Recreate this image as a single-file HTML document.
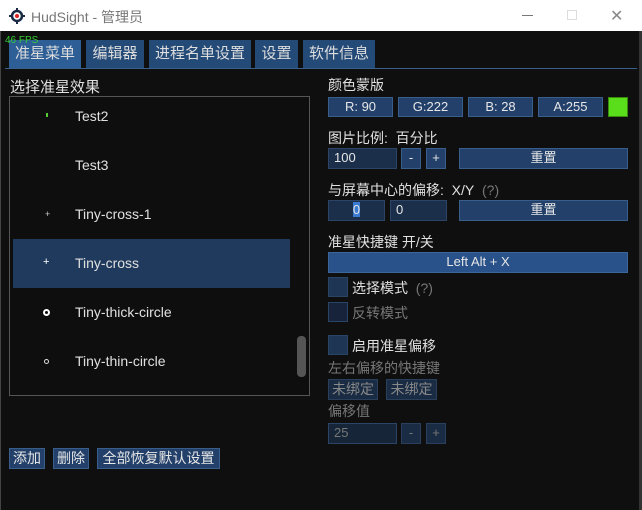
<!DOCTYPE html>
<html><head><meta charset="utf-8"><style>
*{margin:0;padding:0;box-sizing:border-box}
body{width:642px;height:510px;background:#0f0f0f;font-family:"Liberation Sans","Noto Sans CJK SC",sans-serif;color:#e6e6e6;position:relative;overflow:hidden;font-size:14px}
.a{position:absolute}
.tb{left:0;top:0;width:642px;height:31px;background:#fff;color:#777;font-size:14px}
.btn{position:absolute;background:#22406a;border:1px solid #3a5e8c;color:#e6e6e6;text-align:center;font-size:13px;line-height:18px}
.inp{position:absolute;background:#1c2f4a;border:1px solid #2c4466;color:#e6e6e6;font-size:13px;line-height:18px;padding-left:5px}
.tab{position:absolute;top:40px;height:28px;background:#244a78;color:#ddd;font-size:15px;line-height:28px;text-align:center}
.lbl{position:absolute;font-size:14px;color:#e0e0e0}
.cb{position:absolute;width:20px;height:20px;background:#1f3554;border:1px solid #2a4466}
.it{position:absolute;left:75px;font-size:14px;color:#e0e0e0}
.dis{color:#777}
</style></head><body>
<div class="a tb">
 <svg class="a" style="left:9px;top:8px" width="16" height="16" viewBox="0 0 16 16"><circle cx="8" cy="8" r="5" fill="none" stroke="#1a2a44" stroke-width="2.5"/><circle cx="8" cy="8" r="2" fill="#d22"/><path d="M8 0v4M8 12v4M0 8h4M12 8h4" stroke="#1a2a44" stroke-width="2"/></svg>
 <div class="a" style="left:31px;top:7px">HudSight - 管理员</div>
 <div class="a" style="left:522px;top:15px;width:11px;height:1px;background:#777"></div>
 <div class="a" style="left:567px;top:10px;width:10px;height:10px;border:1px solid #ddd"></div>
 <div class="a" style="left:610px;top:6px;font-size:16px;color:#888">✕</div>
</div>
<div class="a" style="left:0;top:31px;width:1px;height:479px;background:#444"></div>
<div class="tab" style="left:9px;width:72px;background:#2d5e96">准星菜单</div>
<div class="tab" style="left:86px;width:58px">编辑器</div>
<div class="tab" style="left:149px;width:102px">进程名单设置</div>
<div class="tab" style="left:255px;width:43px">设置</div>
<div class="tab" style="left:303px;width:72px">软件信息</div>
<div class="a" style="left:5px;top:35px;font-size:10px;line-height:11px;color:#3c3;z-index:5">46 FPS</div>
<div class="a" style="left:5px;top:68px;width:632px;height:1px;background:#3a5e8c"></div>
<div class="lbl" style="left:10px;top:76px;font-size:15px">选择准星效果</div>
<div class="a" style="left:9px;top:96px;width:301px;height:300px;border:1px solid #555;background:#0e0e0e"></div>
<div class="a" style="left:13px;top:239px;width:277px;height:49px;background:#1f3a5c"></div>
<div class="it" style="top:108px">Test2</div>
<div class="it" style="top:157px">Test3</div>
<div class="it" style="top:206px">Tiny-cross-1</div>
<div class="it" style="top:255px">Tiny-cross</div>
<div class="it" style="top:304px">Tiny-thick-circle</div>
<div class="it" style="top:353px">Tiny-thin-circle</div>
<div class="a" style="left:46px;top:113px;width:2px;height:4px;background:#5c3"></div>
<div class="a" style="left:45px;top:209px;font-size:9px;color:#ccc">+</div>
<div class="a" style="left:43px;top:256px;font-size:11px;color:#fff">+</div>
<div class="a" style="left:43px;top:309px;width:7px;height:7px;border:2px solid #fff;border-radius:50%"></div>
<div class="a" style="left:44px;top:359px;width:5px;height:5px;border:1px solid #ddd;border-radius:50%"></div>
<div class="a" style="left:297px;top:336px;width:9px;height:41px;background:#555;border-radius:4px"></div>
<div class="btn" style="left:9px;top:448px;width:36px;height:21px;font-size:14px">添加</div>
<div class="btn" style="left:53px;top:448px;width:36px;height:21px;font-size:14px">删除</div>
<div class="btn" style="left:97px;top:448px;width:123px;height:21px;font-size:14px">全部恢复默认设置</div>

<div class="lbl" style="left:328px;top:75px">颜色蒙版</div>
<div class="btn" style="left:328px;top:97px;width:65px;height:20px">R: 90</div>
<div class="btn" style="left:398px;top:97px;width:65px;height:20px">G:222</div>
<div class="btn" style="left:468px;top:97px;width:65px;height:20px">B: 28</div>
<div class="btn" style="left:538px;top:97px;width:65px;height:20px">A:255</div>
<div class="a" style="left:608px;top:97px;width:20px;height:20px;background:#5ade1c;border:1px solid #3a8a10"></div>
<div class="lbl" style="left:328px;top:128px">图片比例:&nbsp; 百分比</div>
<div class="inp" style="left:328px;top:148px;width:69px;height:21px">100</div>
<div class="btn" style="left:401px;top:148px;width:20px;height:21px">-</div>
<div class="btn" style="left:426px;top:148px;width:20px;height:21px">+</div>
<div class="btn" style="left:459px;top:148px;width:169px;height:21px">重置</div>
<div class="lbl" style="left:328px;top:180px">与屏幕中心的偏移:&nbsp; X/Y&nbsp; <span class="dis">(?)</span></div>
<div class="inp" style="left:328px;top:200px;width:57px;height:21px;text-align:center;padding:0"><span style="background:#3a7ad0">0</span></div>
<div class="inp" style="left:390px;top:200px;width:57px;height:21px">0</div>
<div class="btn" style="left:459px;top:200px;width:169px;height:21px">重置</div>
<div class="lbl" style="left:328px;top:232px">准星快捷键 开/关</div>
<div class="btn" style="left:328px;top:252px;width:300px;height:21px;background:#2a528a;border-color:#3a6699">Left Alt + X</div>
<div class="cb" style="left:328px;top:277px"></div>
<div class="lbl" style="left:352px;top:278px">选择模式&nbsp; <span class="dis">(?)</span></div>
<div class="cb" style="left:328px;top:302px;background:#16233a"></div>
<div class="lbl dis" style="left:352px;top:303px">反转模式</div>
<div class="cb" style="left:328px;top:335px"></div>
<div class="lbl" style="left:352px;top:336px">启用准星偏移</div>
<div class="lbl dis" style="left:328px;top:358px">左右偏移的快捷键</div>
<div class="btn dis" style="left:328px;top:379px;width:50px;height:21px;font-size:14px;background:#1a2c44;border-color:#2a3f5c;color:#888">未绑定</div>
<div class="btn dis" style="left:386px;top:379px;width:51px;height:21px;font-size:14px;background:#1a2c44;border-color:#2a3f5c;color:#888">未绑定</div>
<div class="lbl dis" style="left:328px;top:401px">偏移值</div>
<div class="inp" style="left:328px;top:423px;width:69px;height:21px;color:#777;background:#162538">25</div>
<div class="btn" style="left:401px;top:423px;width:20px;height:21px;color:#777;background:#1a2c44;border-color:#2a3f5c">-</div>
<div class="btn" style="left:426px;top:423px;width:20px;height:21px;color:#777;background:#1a2c44;border-color:#2a3f5c">+</div>
<div class="a" style="left:639px;top:31px;width:3px;height:479px;background:#333"></div>
</body></html>
